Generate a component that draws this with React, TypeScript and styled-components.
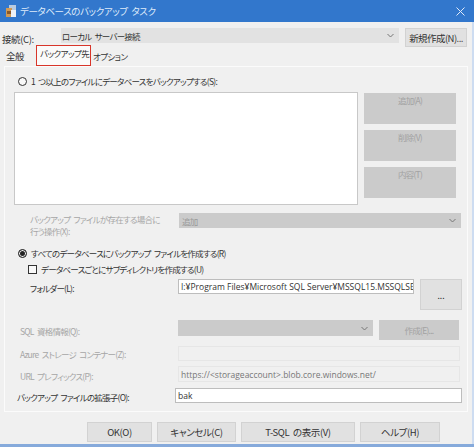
import styled, { createGlobalStyle } from 'styled-components';

const GlobalStyle = createGlobalStyle`
  html, body {
    margin: 0;
    padding: 0;
    background: #f0f0f0;
  }
  body {
    font-family: "Noto Sans CJK JP", "Open Sans", sans-serif;
    font-size: 8.5px;
    letter-spacing: -0.75px;
    word-spacing: 2px;
    font-feature-settings: "palt";
    white-space: nowrap;
    color: #333;
  }
`;

const Window = styled.div`
  width: 474px;
  height: 447px;
  display: flex;
  flex-direction: column;
  overflow: hidden;
  background: #f0f0f0;
  border-bottom: 3px solid #86aadb;
  box-sizing: border-box;
`;

const TitleBar = styled.div`
  height: 22px;
  flex-shrink: 0;
  display: flex;
  align-items: center;
  gap: 4px;
  padding: 0 9px 0 6px;
  color: #dfeafa;
  background: #3277cc;
  font-size: 9.5px;
  letter-spacing: -0.4px;
`;

const TitleText = styled.div`
  flex: 1;
`;

const Content = styled.div`
  flex: 1;
  border-right: 2px solid #cddcf1;
`;

const ConnectionRow = styled.div`
  display: flex;
  align-items: flex-start;
  height: 17px;
  margin-top: 6px;
  padding: 0 5px 0 2px;
`;

const ConnectionLabel = styled.div`
  width: 59px;
  padding-top: 4px;
  font-size: 9.5px;
  letter-spacing: -0.4px;
`;

const Combo = styled.div<{ $flat?: boolean; $height: number; $width?: number; $start?: boolean }>`
  display: flex;
  align-items: center;
  justify-content: space-between;
  align-self: ${(p) => (p.$start ? 'start' : 'auto')};
  box-sizing: border-box;
  height: ${(p) => p.$height}px;
  width: ${(p) => (p.$width ? `${p.$width}px` : 'auto')};
  flex: ${(p) => (p.$width ? 'none' : 1)};
  padding: 0 5px 0 ${(p) => (p.$flat ? 1 : 3)}px;
  color: ${(p) => (p.$flat ? '#333' : '#9a9a9a')};
  background: ${(p) => (p.$flat ? '#e2e2e2' : '#cbcbcb')};
`;

const Button = styled.div<{ $width: number; $height: number; $disabled?: boolean; $top?: boolean }>`
  display: flex;
  justify-content: center;
  align-items: ${(p) => (p.$top ? 'flex-start' : 'center')};
  flex-shrink: 0;
  box-sizing: border-box;
  width: ${(p) => p.$width}px;
  height: ${(p) => p.$height}px;
  color: ${(p) => (p.$disabled ? '#a2a2a2' : '#333')};
  background: ${(p) => (p.$disabled ? '#cbcbcb' : '#e1e1e1')};
  border: 1px solid ${(p) => (p.$disabled ? '#cbcbcb' : '#d2d2d2')};
`;

const NewButton = styled(Button)`
  margin-left: 6px;
  font-size: 9.5px;
  letter-spacing: -0.55px;
`;

const BrowseButton = styled(Button)`
  letter-spacing: 0;
`;

const FooterButton = styled(Button)`
  font-size: 9.5px;
  letter-spacing: -0.4px;
`;

const TabStrip = styled.div`
  display: flex;
  align-items: center;
  height: 21px;
  padding-left: 6px;
`;

const Tab = styled.div<{ $width: number; $small?: boolean }>`
  width: ${(p) => p.$width}px;
  flex-shrink: 0;
  font-size: ${(p) => (p.$small ? 8.5 : 9.5)}px;
  letter-spacing: ${(p) => (p.$small ? -0.6 : -0.4)}px;
`;

const ActiveTab = styled.div`
  box-sizing: border-box;
  width: 55px;
  height: 21px;
  margin: 0 2px 0 12px;
  padding-left: 3px;
  border: 1.5px solid #d8352a;
  background: #fafafa;
  line-height: 15px;
  font-size: 8.5px;
  letter-spacing: -0.6px;
`;

const Panel = styled.div`
  display: flex;
  flex-direction: column;
  box-sizing: border-box;
  height: 346px;
  margin: 0 4px 0 4px;
  border: 1px solid #fbfbfb;
  background: #f0f0f0;
`;

const RadioRow = styled.div<{ $top: number; $left?: number }>`
  display: flex;
  align-items: center;
  gap: 4px;
  height: 14px;
  margin-top: ${(p) => p.$top}px;
  margin-left: ${(p) => p.$left ?? 13}px;
`;

const Radio = styled.span<{ $checked?: boolean }>`
  display: block;
  box-sizing: border-box;
  width: 9px;
  height: 9px;
  border-radius: 50%;
  border: 1px solid #333;
  background: ${(p) => (p.$checked ? '#222' : '#f8f8f8')};
  box-shadow: ${(p) => (p.$checked ? 'inset 0 0 0 1px #f5f5f5' : 'none')};
`;

const Check = styled.span`
  display: block;
  box-sizing: border-box;
  width: 9px;
  height: 9px;
  border: 1px solid #333;
  background: #f8f8f8;
`;

const ListArea = styled.div`
  display: flex;
  gap: 6px;
  margin: 4px 0 0 9px;
  height: 113px;
`;

const ListBox = styled.div`
  box-sizing: border-box;
  width: 344px;
  background: #fff;
  border: 1px solid #c8c8c8;
`;

const ListButtons = styled.div`
  display: flex;
  flex-direction: column;
  gap: 6px;
  padding-top: 1px;
`;

const FieldRow = styled.div<{ $top: number; $labelWidth?: number; $labelLeft?: number }>`
  display: grid;
  grid-template-columns: ${(p) => p.$labelWidth ?? 158}px 1fr;
  margin-top: ${(p) => p.$top}px;
  padding-left: ${(p) => p.$labelLeft ?? 15}px;
  align-items: center;
`;

const Label = styled.div<{ $disabled?: boolean; $start?: boolean; $drop?: number }>`
  align-self: ${(p) => (p.$start ? 'start' : 'auto')};
  padding-top: ${(p) => (p.$start ? 3 : (p.$drop ?? 0))}px;
  color: ${(p) => (p.$disabled ? '#a6a6a6' : '#333')};
  line-height: 12px;
`;

const Input = styled.div<{ $width: number; $height: number; $disabled?: boolean }>`
  box-sizing: border-box;
  display: flex;
  align-items: center;
  width: ${(p) => p.$width}px;
  height: ${(p) => p.$height}px;
  padding-left: 2px;
  overflow: hidden;
  font-family: "Open Sans", sans-serif;
  font-size: 8.5px;
  letter-spacing: 0;
  word-spacing: 0;
  color: ${(p) => (p.$disabled ? '#777' : '#333')};
  background: ${(p) => (p.$disabled ? '#f0f0f0' : '#fff')};
  border: 1px solid ${(p) => (p.$disabled ? '#e6e6e6' : '#bdbdbd')};
`;

const InlineRow = styled.div`
  display: flex;
  align-items: flex-start;
  gap: 6px;
`;

const Footer = styled.div`
  display: flex;
  gap: 5px;
  margin-top: 10px;
  padding-left: 87px;
`;

const Chevron = () => (
  <svg width="7" height="5" viewBox="0 0 7 5">
    <path d="M0.5 1 L3.5 4 L6.5 1" fill="none" stroke="#777" strokeWidth="1" />
  </svg>
);

const AppIcon = () => (
  <svg width="10" height="13" viewBox="0 0 10 13">
    <rect x="3" y="0" width="7" height="6" fill="#b9cbe0" />
    <rect x="0" y="3" width="6" height="9" fill="#d09a55" />
    <rect x="5" y="5" width="5" height="7" fill="#eef2f7" />
    <rect x="1" y="6" width="4" height="3" fill="#8b5a2b" />
  </svg>
);

const CloseIcon = () => (
  <svg width="9" height="9" viewBox="0 0 9 9">
    <path d="M0.5 0.5 L8.5 8.5 M8.5 0.5 L0.5 8.5" stroke="#dfeafa" strokeWidth="1" />
  </svg>
);

export default function App() {
  return (
    <>
      <GlobalStyle />
      <Window>
        <TitleBar>
          <AppIcon />
          <TitleText>データベースのバックアップ タスク</TitleText>
          <CloseIcon />
        </TitleBar>

        <Content>
          <ConnectionRow>
            <ConnectionLabel>接続(C):</ConnectionLabel>
            <Combo $flat $height={15}>
              ローカル サーバー接続
              <Chevron />
            </Combo>
            <NewButton $width={62} $height={19}>新規作成(N)...</NewButton>
          </ConnectionRow>

          <TabStrip>
            <Tab $width={18}>全般</Tab>
            <ActiveTab>バックアップ先</ActiveTab>
            <Tab $width={40} $small>オプション</Tab>
          </TabStrip>

          <Panel>
            <RadioRow $top={7}>
              <Radio />
              1 つ以上のファイルにデータベースをバックアップする(S):
            </RadioRow>

            <ListArea>
              <ListBox />
              <ListButtons>
                <Button $width={92} $height={31} $disabled $top>追加(A)</Button>
                <Button $width={92} $height={31} $disabled $top>削除(V)</Button>
                <Button $width={92} $height={31} $disabled $top>内容(T)</Button>
              </ListButtons>
            </ListArea>

            <FieldRow $top={8} $labelLeft={25} $labelWidth={149}>
              <Label $disabled>
                バックアップ ファイルが存在する場合に
                <br />
                行う操作(X):
              </Label>
              <Combo $height={15} $width={282} $start>
                追加
                <Chevron />
              </Combo>
            </FieldRow>

            <RadioRow $top={9}>
              <Radio $checked />
              すべてのデータベースにバックアップ ファイルを作成する(R)
            </RadioRow>
            <RadioRow $top={2} $left={23}>
              <Check />
              データベースごとにサブディレクトリを作成する(U)
            </RadioRow>

            <FieldRow $top={3} $labelLeft={25} $labelWidth={148}>
              <Label $start>フォルダー(L):</Label>
              <InlineRow>
                <Input $width={236} $height={15}>I:¥Program Files¥Microsoft SQL Server¥MSSQL15.MSSQLSE</Input>
                <BrowseButton $width={42} $height={31}>...</BrowseButton>
              </InlineRow>
            </FieldRow>

            <FieldRow $top={10} $labelWidth={158}>
              <Label $disabled $drop={1}>SQL 資格情報(Q):</Label>
              <InlineRow>
                <Combo $height={16} $width={195}>
                  <span />
                  <Chevron />
                </Combo>
                <Button $width={80} $height={20} $disabled>作成(E)...</Button>
              </InlineRow>
            </FieldRow>

            <FieldRow $top={6} $labelWidth={158}>
              <Label $disabled $drop={1}>Azure ストレージ コンテナー(Z):</Label>
              <Input $width={282} $height={15} $disabled />
            </FieldRow>

            <FieldRow $top={5} $labelWidth={158}>
              <Label $disabled $drop={3}>URL プレフィックス(P):</Label>
              <Input $width={282} $height={16} $disabled>https://&lt;storageaccount&gt;.blob.core.windows.net/</Input>
            </FieldRow>

            <FieldRow $top={6} $labelLeft={12} $labelWidth={158}>
              <Label $drop={3}>バックアップ ファイルの拡張子(O):</Label>
              <Input $width={287} $height={15}>bak</Input>
            </FieldRow>
          </Panel>

          <Footer>
            <FooterButton $width={65} $height={20}>OK(O)</FooterButton>
            <FooterButton $width={79} $height={20}>キャンセル(C)</FooterButton>
            <FooterButton $width={114} $height={20}>T-SQL の表示(V)</FooterButton>
            <FooterButton $width={80} $height={20}>ヘルプ(H)</FooterButton>
          </Footer>
        </Content>
      </Window>
    </>
  );
}
